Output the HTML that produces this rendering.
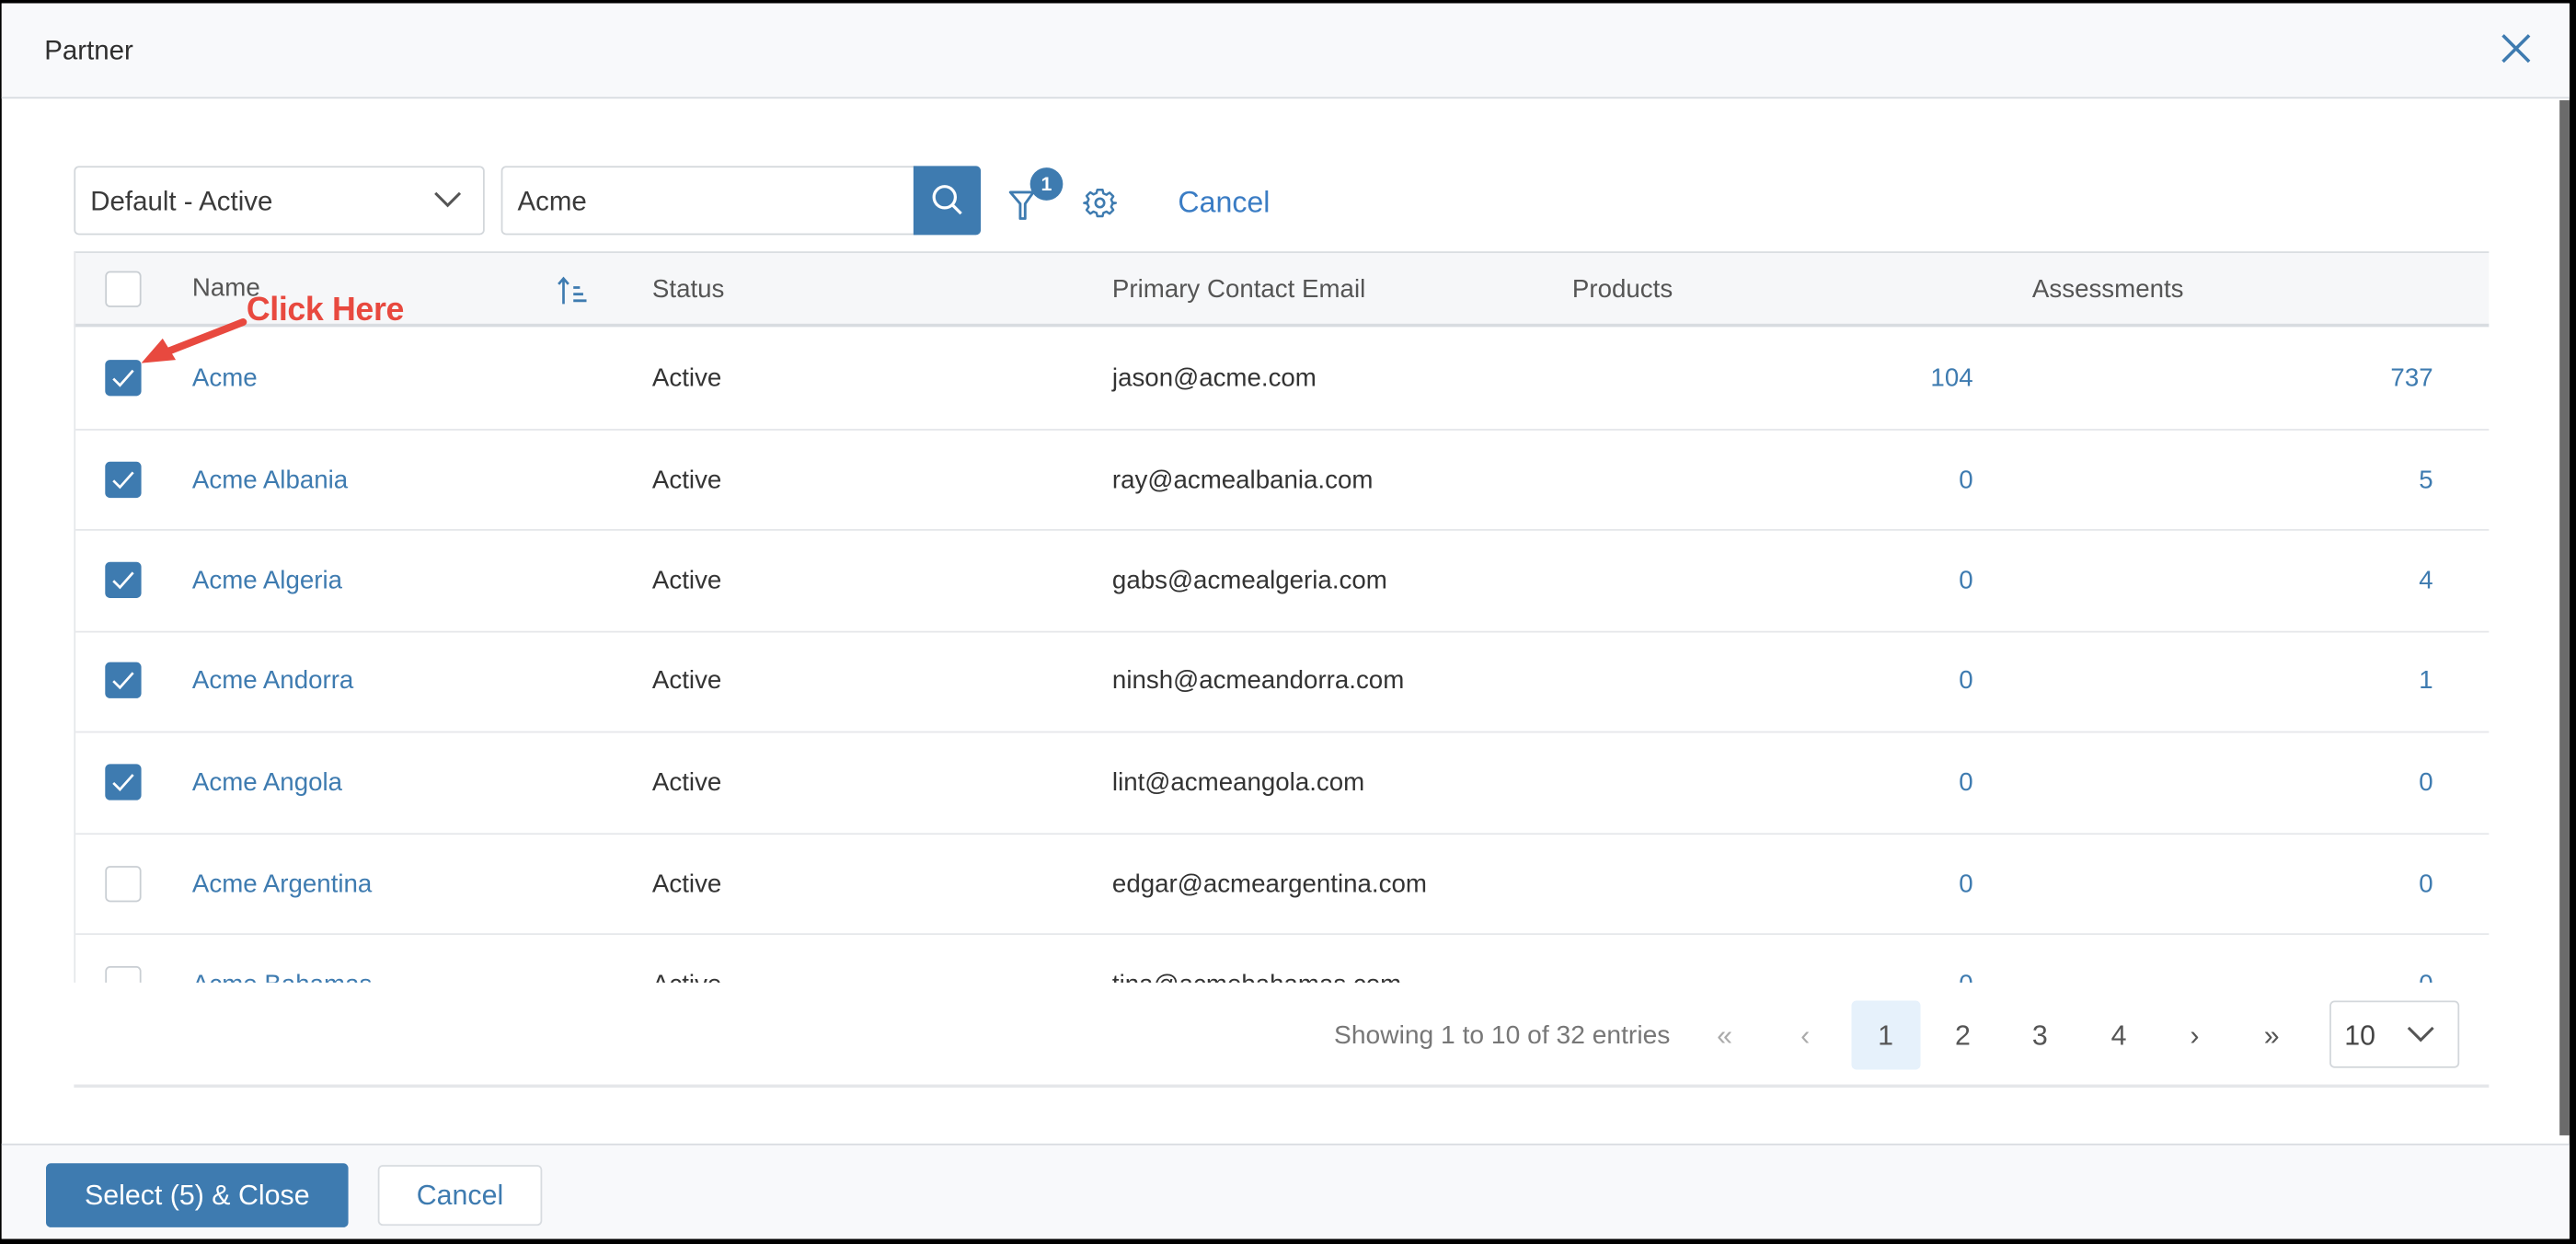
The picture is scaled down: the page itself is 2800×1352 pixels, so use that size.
<!DOCTYPE html>
<html><head><meta charset="utf-8">
<style>
*{box-sizing:border-box;margin:0;padding:0}
html,body{width:2800px;height:1352px;overflow:hidden;background:#000}
#s{position:absolute;left:0;top:0;width:1568px;height:756px;overflow:hidden;transform:scale(1.785714);transform-origin:0 0;font-family:"Liberation Sans",sans-serif;color:#333}
.a{position:absolute}
.t{position:absolute;font-size:15.5px;white-space:nowrap;line-height:1}
.cb{position:absolute;left:64px;width:22px;height:22px;border:1.5px solid #c9ced3;border-radius:3px;background:#fff}
.cb.on{background:#3e7bb0;border-color:#3e7bb0}
.cb.on svg{position:absolute;left:2px;top:2px}
.ln{position:absolute;left:45px;width:1470px;height:1px;background:#e5e7ea}
.blue{color:#3e7bb0}
</style></head><body>
<div id="s">
<div class="a" style="left:1px;top:2px;width:1563px;height:752px;background:#fff"></div>
<div class="a" style="left:1px;top:2px;width:1563px;height:58px;background:#f8f9fb;border-bottom:1.5px solid #d8dce0"></div>
<div class="t" style="left:27px;top:23px;font-size:16.5px;color:#2f2f2f">Partner</div>
<svg class="a" style="left:1522px;top:20px" width="19" height="19" viewBox="0 0 19 19"><path d="M1.5 1.5L17.5 17.5M17.5 1.5L1.5 17.5" stroke="#3e7bb0" stroke-width="2" fill="none"/></svg>
<div class="a" style="left:1558px;top:61px;width:6px;height:630px;background:#6b6b6b"></div>
<div class="a" style="left:45px;top:101px;width:250px;height:42px;border:1.5px solid #d3d7db;border-radius:3px;background:#fff"></div>
<div class="t" style="left:55px;top:115px;font-size:16.5px;color:#3a3a3a">Default - Active</div>
<svg class="a" style="left:264px;top:116px" width="17" height="11" viewBox="0 0 17 11"><path d="M1 1.5L8.5 9L16 1.5" stroke="#555" stroke-width="1.7" fill="none"/></svg>
<div class="a" style="left:305px;top:101px;width:253px;height:42px;border:1.5px solid #d3d7db;border-radius:3px 0 0 3px;background:#fff"></div>
<div class="t" style="left:315px;top:115px;font-size:16.5px;color:#3a3a3a">Acme</div>
<div class="a" style="left:556px;top:101px;width:41px;height:42px;background:#3e7bb0;border-radius:0 3px 3px 0"></div>
<svg class="a" style="left:566px;top:111px" width="22" height="22" viewBox="0 0 22 22"><circle cx="9" cy="9" r="6.5" stroke="#fff" stroke-width="1.8" fill="none"/><path d="M13.5 13.5L19 19" stroke="#fff" stroke-width="1.8"/></svg>
<svg class="a" style="left:612px;top:110px" width="26" height="26" viewBox="0 0 26 26"><path d="M3 7H17L12 14V23H9V14Z" stroke="#3e7bb0" stroke-width="1.6" fill="none" stroke-linejoin="round"/></svg>
<div class="a" style="left:627px;top:102px;width:20px;height:20px;border-radius:50%;background:#3e7bb0;color:#fff;font-size:12px;font-weight:bold;text-align:center;line-height:20px">1</div>
<svg class="a" style="left:659px;top:113px" width="21" height="21" viewBox="0 0 24 24"><path d="M10 2h4l.6 2.8 2.3 1 2.4-1.6 2.8 2.8-1.6 2.4 1 2.3L24 12v0l-2.5.6-1 2.3 1.6 2.4-2.8 2.8-2.4-1.6-2.3 1L14 22h-4l-.6-2.5-2.3-1-2.4 1.6-2.8-2.8 1.6-2.4-1-2.3L0 12l2.5-.6 1-2.3L1.9 6.7l2.8-2.8 2.4 1.6 2.3-1Z" transform="translate(1 1) scale(.92)" stroke="#3e7bb0" stroke-width="1.7" fill="none" stroke-linejoin="round"/><circle cx="12" cy="12" r="3" stroke="#3e7bb0" stroke-width="1.7" fill="none"/></svg>
<div class="t" style="left:717px;top:114px;font-size:18px;color:#3a7cc4">Cancel</div>
<div class="a" style="left:45px;top:153px;width:1470px;height:46px;background:#f6f7f9;border-top:1.5px solid #dadee2;border-bottom:2.5px solid #d8dce0"></div>
<div class="a" style="left:45px;top:153px;width:1px;height:445px;background:#e5e7ea"></div>
<div class="cb" style="top:165px"></div>
<div class="t" style="left:117px;top:168px;color:#555">Name</div>
<svg class="a" style="left:339px;top:168px" width="20" height="18" viewBox="0 0 20 18"><path d="M4 17V2M1 5L4 1.5L7 5" stroke="#3e7bb0" stroke-width="1.5" fill="none"/><path d="M10 7h4M10 11h6M10 15h8" stroke="#3e7bb0" stroke-width="1.6"/></svg>
<div class="t" style="left:397px;top:169px;color:#555">Status</div>
<div class="t" style="left:677px;top:169px;color:#555">Primary Contact Email</div>
<div class="t" style="left:957px;top:169px;color:#555">Products</div>
<div class="t" style="left:1237px;top:169px;color:#555">Assessments</div>
<div class="a" style="left:46px;top:200px;width:1470px;height:398px;overflow:hidden">
<div style="position:absolute;left:-46px;top:-200px;width:1568px;height:800px">
<div class="cb on" style="top:219px"><svg width="16" height="16" viewBox="0 0 16 16"><path d="M2 8.5L6 12.5L14 3.5" stroke="#fff" stroke-width="1.5" fill="none"/></svg></div>
<div class="t blue" style="left:117px;top:223px">Acme</div><div class="t" style="left:397px;top:223px">Active</div><div class="t" style="left:677px;top:223px">jason@acme.com</div>
<div class="t blue" style="left:1101px;width:100px;text-align:right;top:223px">104</div><div class="t blue" style="left:1381px;width:100px;text-align:right;top:223px">737</div>
<div class="ln" style="top:261px"></div>
<div class="cb on" style="top:281px"><svg width="16" height="16" viewBox="0 0 16 16"><path d="M2 8.5L6 12.5L14 3.5" stroke="#fff" stroke-width="1.5" fill="none"/></svg></div>
<div class="t blue" style="left:117px;top:285px">Acme Albania</div><div class="t" style="left:397px;top:285px">Active</div><div class="t" style="left:677px;top:285px">ray@acmealbania.com</div>
<div class="t blue" style="left:1101px;width:100px;text-align:right;top:285px">0</div><div class="t blue" style="left:1381px;width:100px;text-align:right;top:285px">5</div>
<div class="ln" style="top:322px"></div>
<div class="cb on" style="top:342px"><svg width="16" height="16" viewBox="0 0 16 16"><path d="M2 8.5L6 12.5L14 3.5" stroke="#fff" stroke-width="1.5" fill="none"/></svg></div>
<div class="t blue" style="left:117px;top:346px">Acme Algeria</div><div class="t" style="left:397px;top:346px">Active</div><div class="t" style="left:677px;top:346px">gabs@acmealgeria.com</div>
<div class="t blue" style="left:1101px;width:100px;text-align:right;top:346px">0</div><div class="t blue" style="left:1381px;width:100px;text-align:right;top:346px">4</div>
<div class="ln" style="top:384px"></div>
<div class="cb on" style="top:403px"><svg width="16" height="16" viewBox="0 0 16 16"><path d="M2 8.5L6 12.5L14 3.5" stroke="#fff" stroke-width="1.5" fill="none"/></svg></div>
<div class="t blue" style="left:117px;top:407px">Acme Andorra</div><div class="t" style="left:397px;top:407px">Active</div><div class="t" style="left:677px;top:407px">ninsh@acmeandorra.com</div>
<div class="t blue" style="left:1101px;width:100px;text-align:right;top:407px">0</div><div class="t blue" style="left:1381px;width:100px;text-align:right;top:407px">1</div>
<div class="ln" style="top:445px"></div>
<div class="cb on" style="top:465px"><svg width="16" height="16" viewBox="0 0 16 16"><path d="M2 8.5L6 12.5L14 3.5" stroke="#fff" stroke-width="1.5" fill="none"/></svg></div>
<div class="t blue" style="left:117px;top:469px">Acme Angola</div><div class="t" style="left:397px;top:469px">Active</div><div class="t" style="left:677px;top:469px">lint@acmeangola.com</div>
<div class="t blue" style="left:1101px;width:100px;text-align:right;top:469px">0</div><div class="t blue" style="left:1381px;width:100px;text-align:right;top:469px">0</div>
<div class="ln" style="top:507px"></div>
<div class="cb" style="top:527px"></div>
<div class="t blue" style="left:117px;top:531px">Acme Argentina</div><div class="t" style="left:397px;top:531px">Active</div><div class="t" style="left:677px;top:531px">edgar@acmeargentina.com</div>
<div class="t blue" style="left:1101px;width:100px;text-align:right;top:531px">0</div><div class="t blue" style="left:1381px;width:100px;text-align:right;top:531px">0</div>
<div class="ln" style="top:568px"></div>
<div class="cb" style="top:588px"></div>
<div class="t blue" style="left:117px;top:592px">Acme Bahamas</div><div class="t" style="left:397px;top:592px">Active</div><div class="t" style="left:677px;top:592px">tina@acmebahamas.com</div>
<div class="t blue" style="left:1101px;width:100px;text-align:right;top:592px">0</div><div class="t blue" style="left:1381px;width:100px;text-align:right;top:592px">0</div>
</div></div>
<div class="t" style="left:150px;top:179px;font-size:20px;font-weight:bold;color:#e8493f;letter-spacing:-0.2px">Click Here</div>
<svg class="a" style="left:80px;top:190px" width="75" height="40" viewBox="0 0 75 40"><path d="M68 6L22 24" stroke="#e8493f" stroke-width="4.5" stroke-linecap="round"/><path d="M6 31L19 16L27 29Z" fill="#e8493f"/></svg>
<div class="t" style="left:812px;top:623px;font-size:15.8px;color:#777">Showing 1 to 10 of 32 entries</div>
<div class="t" style="left:1045px;top:622px;font-size:17px;color:#aaa">«</div>
<div class="t" style="left:1096px;top:622px;font-size:17px;color:#aaa">‹</div>
<div class="a" style="left:1127px;top:609px;width:42px;height:42px;background:#e6f1fb;border-radius:3px"></div>
<div class="t" style="left:1143px;top:622px;font-size:17px;color:#555">1</div>
<div class="t" style="left:1190px;top:622px;font-size:17px;color:#555">2</div>
<div class="t" style="left:1237px;top:622px;font-size:17px;color:#555">3</div>
<div class="t" style="left:1285px;top:622px;font-size:17px;color:#555">4</div>
<div class="t" style="left:1333px;top:622px;font-size:17px;color:#555">›</div>
<div class="t" style="left:1378px;top:622px;font-size:17px;color:#555">»</div>
<div class="a" style="left:1418px;top:609px;width:79px;height:41px;border:1.5px solid #d3d7db;border-radius:3px"></div>
<div class="t" style="left:1427px;top:622px;font-size:17px;color:#444">10</div>
<svg class="a" style="left:1465px;top:624px" width="17" height="11" viewBox="0 0 17 11"><path d="M1 1.5L8.5 9L16 1.5" stroke="#555" stroke-width="1.7" fill="none"/></svg>
<div class="ln" style="top:660px;height:1.5px"></div>
<div class="a" style="left:1px;top:696px;width:1563px;height:58px;background:#f8f9fb;border-top:1.5px solid #d8dce0"></div>
<div class="a" style="left:28px;top:708px;width:184px;height:39px;background:#3e7bb0;border-radius:3px;color:#fff;font-size:17px;text-align:center;line-height:39px">Select (5) &amp; Close</div>
<div class="a" style="left:230px;top:709px;width:100px;height:37px;background:#fff;border:1px solid #d8dce0;border-radius:3px;color:#3e7bb0;font-size:17px;text-align:center;line-height:35px">Cancel</div>
</div>
</body></html>
